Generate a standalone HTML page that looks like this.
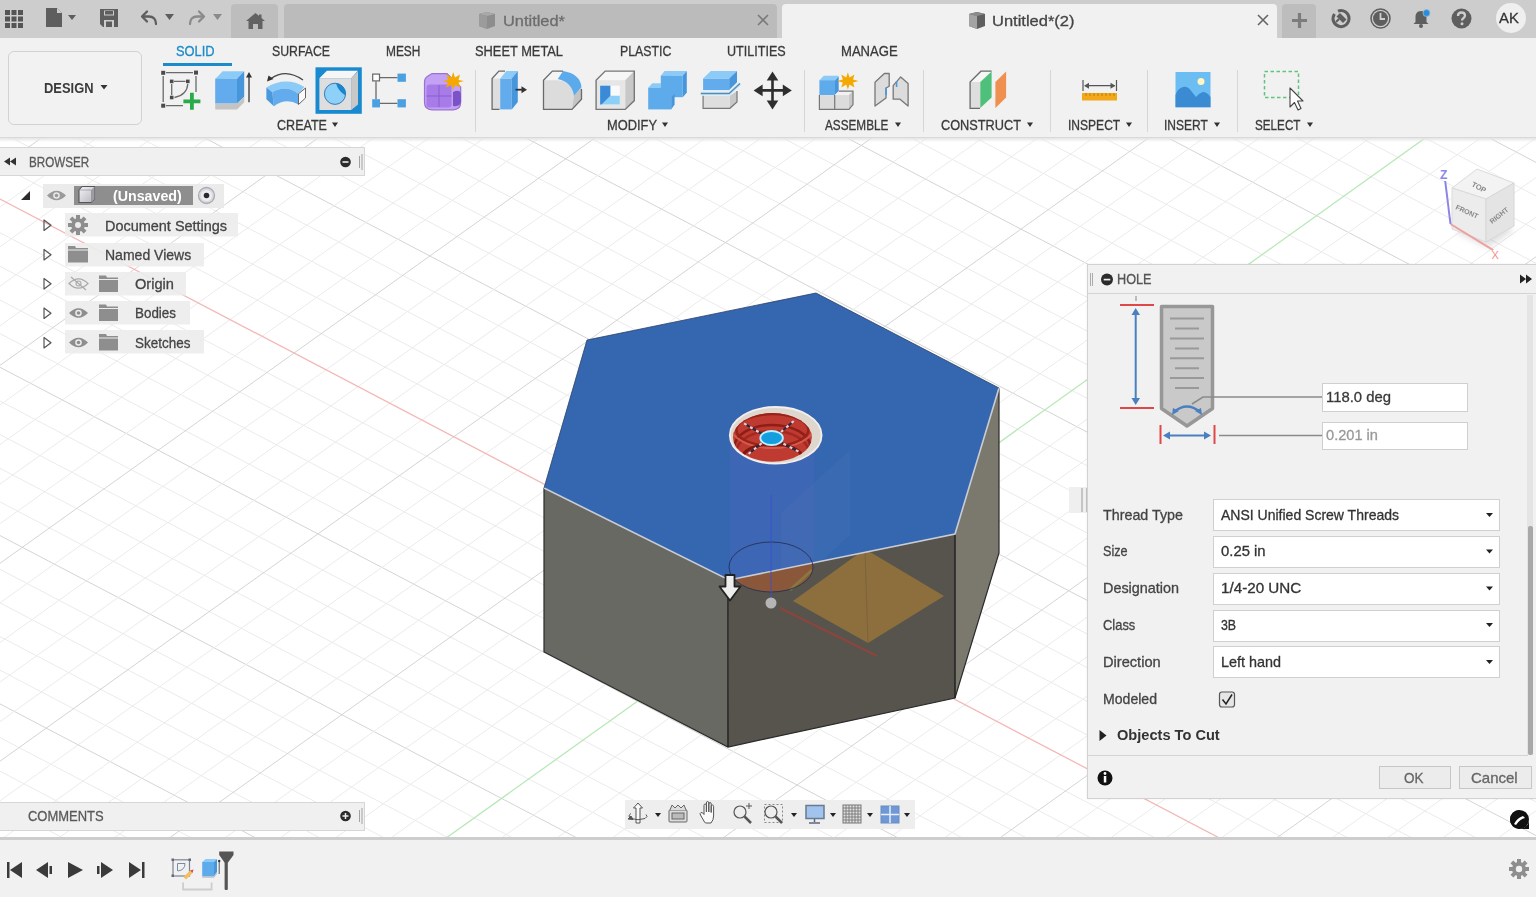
<!DOCTYPE html>
<html><head><meta charset="utf-8">
<style>
*{box-sizing:border-box;margin:0;padding:0}
html,body{width:1536px;height:897px;overflow:hidden;background:#fff;font-family:"Liberation Sans",sans-serif;color:#3c3c3c}
.a{position:absolute}
#topbar{left:0;top:0;width:1536px;height:38px;background:#cdcdcd}
#toolbar{left:0;top:38px;width:1536px;height:100px;background:#f1f1f1;border-bottom:1px solid #d9d9d9}
#viewport{left:0;top:138px;width:1536px;height:700px;background:#fff;overflow:hidden}
#timeline{left:0;top:837px;width:1536px;height:60px;background:#f1f1f1;border-top:3px solid #cdcdcd}
.tab{top:4px;height:34px;border-radius:4px 4px 0 0}
.tl{font-size:13.5px;color:#444;top:44px;white-space:nowrap;line-height:16px}
.gl{font-size:13.5px;color:#444;top:117px;white-space:nowrap;line-height:16px}
.sep{top:70px;width:1px;height:62px;background:#d6d6d6}
.tri{display:inline-block;width:0;height:0;border-left:3.5px solid transparent;border-right:3.5px solid transparent;border-top:5px solid #333;vertical-align:middle;margin-left:4px;position:relative;top:-2px}
svg{overflow:visible}
.tx{white-space:nowrap;line-height:1;}
</style></head><body>
<div id="topbar" class="a">
<!-- apps grid -->
<svg class="a" style="left:5px;top:10px" width="18" height="18"><g fill="#555">
<rect x="0" y="0" width="5" height="5"/><rect x="6.5" y="0" width="5" height="5"/><rect x="13" y="0" width="5" height="5"/>
<rect x="0" y="6.5" width="5" height="5"/><rect x="6.5" y="6.5" width="5" height="5"/><rect x="13" y="6.5" width="5" height="5"/>
<rect x="0" y="13" width="5" height="5"/><rect x="6.5" y="13" width="5" height="5"/><rect x="13" y="13" width="5" height="5"/></g></svg>
<!-- doc -->
<svg class="a" style="left:46px;top:8px" width="34" height="22"><path d="M0 0H11L16 5V19H0Z" fill="#5e5e5e"/><path d="M11 0V5H16" fill="#cdcdcd"/><path d="M22 7H30L26 12Z" fill="#5e5e5e"/></svg>
<!-- save -->
<svg class="a" style="left:100px;top:9px" width="18" height="18"><path d="M0 0H18V18H3L0 15Z" fill="#5e5e5e"/><rect x="4" y="1.5" width="10" height="5" fill="#cdcdcd"/><rect x="5" y="2" width="8" height="3.5" fill="#5e5e5e"/><rect x="4" y="11" width="10" height="7" fill="#cdcdcd"/><rect x="6" y="12.5" width="6" height="5.5" fill="#5e5e5e"/></svg>
<!-- undo -->
<svg class="a" style="left:140px;top:10px" width="40" height="18"><path d="M3 6.5H9C13 6.5 16 9 16 14" stroke="#5e5e5e" stroke-width="2.3" fill="none" stroke-linecap="round"/><path d="M7 1.5L2 6.5L7 11.5" stroke="#5e5e5e" stroke-width="2.3" fill="none" stroke-linecap="round" stroke-linejoin="round"/><path d="M25 4H34L29.5 10Z" fill="#5e5e5e"/></svg>
<!-- redo -->
<svg class="a" style="left:187px;top:10px" width="40" height="18"><path d="M16 6.5H10C6 6.5 3 9 3 14" stroke="#8a8a8a" stroke-width="2.3" fill="none" stroke-linecap="round"/><path d="M12 1.5L17 6.5L12 11.5" stroke="#8a8a8a" stroke-width="2.3" fill="none" stroke-linecap="round" stroke-linejoin="round"/><path d="M26 4H35L30.5 10Z" fill="#8a8a8a"/></svg>
<!-- home tab -->
<div class="a tab" style="left:231px;width:47px;background:#bdbdbd"></div>
<svg class="a" style="left:246px;top:13px" width="19" height="17"><path d="M9.5 0L19 8H16.5V16H12V11H7V16H2.5V8H0Z" fill="#626262"/><rect x="13" y="1.5" width="2.5" height="4" fill="#626262"/></svg>
<!-- tab 1 -->
<div class="a tab" style="left:284px;width:493px;background:#bbbbbb"></div>
<svg class="a" style="left:477px;top:11px" width="20" height="19"><path d="M2 3L10 1L18 3V15L10 18L2 15Z" fill="#8d8d8d"/><path d="M2 3L10 5L18 3L10 1Z" fill="#a9a9a9"/><path d="M10 5V18L2 15V3Z" fill="#9b9b9b"/></svg>
<svg class="a" style="left:757px;top:14px" width="12" height="12"><path d="M1 1L11 11M11 1L1 11" stroke="#7a7a7a" stroke-width="1.6"/></svg>
<!-- tab 2 active -->
<div class="a tab" style="left:782px;width:495px;height:35px;background:#f1f1f1"></div>
<svg class="a" style="left:967px;top:11px" width="20" height="19"><path d="M2 3L10 1L18 3V15L10 18L2 15Z" fill="#5f5f5f"/><path d="M2 3L10 5L18 3L10 1Z" fill="#8a8a8a"/><path d="M10 5V18L2 15V3Z" fill="#a3a3a3"/></svg>
<svg class="a" style="left:1257px;top:14px" width="12" height="12"><path d="M1 1L11 11M11 1L1 11" stroke="#666" stroke-width="1.6"/></svg>
<!-- plus tab -->
<div class="a tab" style="left:1282px;width:34px;background:#bdbdbd"></div>
<svg class="a" style="left:1291px;top:12px" width="17" height="17"><path d="M8.5 1V16M1 8.5H16" stroke="#7c7c7c" stroke-width="3.2"/></svg>
<!-- right icons -->
<svg class="a" style="left:1330px;top:8px" width="21" height="21"><path d="M4.5 6A8 8 0 1 0 8 3.2" fill="none" stroke="#5e5e5e" stroke-width="3"/><path d="M6.5 8.5L10 5L16.5 11.5L13 15Z" fill="#5e5e5e"/><path d="M6 14L9 11" stroke="#5e5e5e" stroke-width="2"/></svg>
<svg class="a" style="left:1370px;top:8px" width="21" height="21"><circle cx="10.5" cy="10.5" r="9.5" stroke="#5e5e5e" stroke-width="1.5" fill="none"/><circle cx="10.5" cy="10.5" r="7.5" fill="#5e5e5e"/><path d="M10.5 5V11H15" stroke="#cdcdcd" stroke-width="1.8" fill="none"/></svg>
<svg class="a" style="left:1411px;top:7px" width="22" height="22"><path d="M10 4C6 4 4.5 7 4.5 10V15L2.5 17H17.5L15.5 15V10C15.5 7 14 4 10 4Z" fill="#5e5e5e"/><circle cx="10" cy="19" r="2" fill="#5e5e5e"/><circle cx="15.5" cy="6" r="3.5" fill="#2a8ede" stroke="#9bc" stroke-width="0.8"/></svg>
<svg class="a" style="left:1451px;top:8px" width="21" height="21"><circle cx="10.5" cy="10.5" r="10" fill="#5e5e5e"/><path d="M7 8C7 5.5 8.8 4.5 10.5 4.5C12.5 4.5 14 5.8 14 7.6C14 10 11 10.2 11 12.5" stroke="#cdcdcd" stroke-width="2.3" fill="none"/><circle cx="11" cy="15.8" r="1.5" fill="#cdcdcd"/></svg>
<div class="a" style="left:1496px;top:3px;width:30px;height:30px;border-radius:50%;background:#efefef;"></div>
</div>
<div id="toolbar" class="a"></div>
<div class="a" style="left:8px;top:51px;width:134px;height:74px;border:1.5px solid #d2d2d2;border-radius:6px;background:#f2f2f2"></div>
<div class="a" style="left:163px;top:63px;width:69px;height:3px;background:#1b8bc9"></div>
<div class="a sep" style="left:475px"></div>
<div class="a sep" style="left:804px"></div>
<div class="a sep" style="left:923px"></div>
<div class="a sep" style="left:1050px"></div>
<div class="a sep" style="left:1147px"></div>
<div class="a sep" style="left:1237px"></div>
<svg class="a" style="left:0;top:0" width="1536" height="138">
<g fill="#333">
<path d="M100.5 85H107.5L104 89.5Z"/>
<path d="M332 122.5H338L335 127Z"/><path d="M662 122.5H668L665 127Z"/><path d="M895 122.5H901L898 127Z"/>
<path d="M1027 122.5H1033L1030 127Z"/><path d="M1126 122.5H1132L1129 127Z"/><path d="M1214 122.5H1220L1217 127Z"/><path d="M1307 122.5H1313L1310 127Z"/>
</g>
<!-- sketch icon -->
<g stroke="#6a6a6a" stroke-width="1.3" fill="none">
<path d="M166 72.7H193M163.2 76V102M196 76V92M166 105.7H183"/>
<path d="M174 81.4H185.5M171.7 84V95M187.8 84Q187 95 174.5 97.5"/>
</g>
<g fill="#4a4a4a"><rect x="161.2" y="70.8" width="4" height="4"/><rect x="194" y="70.6" width="4" height="4"/><rect x="161.2" y="103.7" width="4" height="4"/>
<rect x="169.9" y="79.6" width="3.6" height="3.6"/><rect x="186" y="79.6" width="3.6" height="3.6"/><rect x="169.9" y="95.7" width="3.6" height="3.6"/></g>
<path d="M191.9 92.8V109.8M183.4 101.3H200.4" stroke="#2aaa4a" stroke-width="3.8"/>
<!-- extrude -->
<g>
<path d="M215.2 79L222.7 71.2H244.2L237 78.7Z" fill="#8ccbf7"/>
<path d="M237 78.7L244.2 71.2V96.8L237 103.6Z" fill="#4796dc"/>
<path d="M215.2 78.8H237V103.6H215.2Z" fill="#62aced"/>
<path d="M215.2 103.6H237L244.2 96.8V102.3L237 109.5H215.2Z" fill="#c4c4c4"/>
<path d="M249 102.3V76" stroke="#333" stroke-width="1.3"/><path d="M246 77.5L249 72L252 77.5Z" fill="#333"/>
</g>
<!-- revolve -->
<g>
<path d="M303 80Q286 68 271 78.5" fill="none" stroke="#444" stroke-width="1.3"/><path d="M267 81.5L268.5 75.5L273.5 79Z" fill="#333"/>
<path d="M266.4 87.4Q286 76 304.4 86.9L298.5 93.8Q286 84 272.3 92.2Z" fill="#8ccbf7"/>
<path d="M272.3 92.2Q286 84 298.5 93.8V104.5Q286 97 273.9 106.2Z" fill="#62aced"/>
<path d="M266.4 87.4L272.3 92.2L273.9 106.2L266.4 99.2Z" fill="#4a98de"/>
<path d="M298.5 93.8L305.5 88V98L298.5 104.5Z" fill="#fafafa" stroke="#666" stroke-width="1"/>
</g>
<!-- hole (active) -->
<g>
<rect x="315.5" y="67.3" width="46.3" height="46.5" fill="#1a8ad0"/>
<path d="M319.4 78.2L326.9 70.7H358L351.2 78.2Z" fill="#f6f6f6"/>
<path d="M351.2 78.2L358 71.4V104.4L351.2 110Z" fill="#c8c8c8"/>
<rect x="319.4" y="78.2" width="31.8" height="31.8" fill="#dedede"/>
<circle cx="335" cy="93.8" r="10.6" fill="#8dd0f8" stroke="#3a7ab8" stroke-width="1"/>
<path d="M336 83.3A10.6 10.6 0 0 1 345.5 95.5Q338 91 336 83.3Z" fill="#1a85cc"/>
</g>
<!-- pattern -->
<g>
<path d="M379.7 77.7H397.5M376 81.4V99.2M380 103.3H397.5" stroke="#6a6a6a" stroke-width="1.3"/>
<rect x="372.7" y="74.1" width="6.8" height="6.8" fill="#fff" stroke="#666" stroke-width="1.2"/>
<rect x="397.5" y="73.6" width="8.4" height="8.2" fill="#4aa0e0"/><rect x="372.2" y="99.2" width="7.8" height="8.2" fill="#4aa0e0"/><rect x="397.5" y="99.2" width="8.4" height="8.2" fill="#4aa0e0"/>
</g>
<!-- purple form -->
<g>
<path d="M432 73.6H447L460.7 87V102Q460.7 109.8 453 109.8H432Q424.5 109.8 424.5 102V82Q424.5 78 428 76Z" fill="#c3a2f5" stroke="#9a70d0" stroke-width="1.2"/>
<rect x="426.5" y="84.5" width="25" height="23" rx="3" fill="#a87ce8"/>
<path d="M439 85V107M426.5 96H451.5" stroke="#8a5cd0" stroke-width="1"/>
<path d="M453 92Q461 88 461 96V101Q461 107 453 106Z" fill="#7c52c8"/>
<path d="M453.2 72L455 77.5L460 74.5L458.5 80L464 81L458.5 82.5L460.5 87.5L455 85L453.2 90L451.5 85L446 87.5L448 82.5L442.5 81L448 80L446.5 74.5L451.5 77.5Z" fill="#f5a800"/>
</g>
<!-- press pull -->
<g>
<path d="M492.1 78.6L498.9 71.1H506.3L500.2 78.6Z" fill="#f4f4f4"/>
<path d="M492.1 78.6H500.2V109.4H492.1Z" fill="#dedede"/>
<path d="M505 71.1H498.9L492.1 78.6V109.4H499.5" fill="none" stroke="#6a6a6a" stroke-width="1.3"/>
<path d="M500.2 78.6L506.3 71.1H517.8L511.7 78.6Z" fill="#8ccbf7"/>
<rect x="500.2" y="78.6" width="11.5" height="30.8" fill="#62aced"/>
<path d="M511.7 78.6L517.8 71.1V101.9L511.7 109.4Z" fill="#4796dc"/>
<path d="M515.5 89.7H523" stroke="#333" stroke-width="1.8"/><path d="M521.5 86.2L527 89.7L521.5 93.2Z" fill="#333"/>
</g>
<!-- fillet -->
<g>
<path d="M543.5 80.2L552.4 71.1H563.2L557.8 78.9Z" fill="#f4f4f4"/>
<path d="M543.5 80.2H557.8Q574 82 574 95.8L572 109.4H543.5Z" fill="#dcdcdc"/>
<path d="M574 95.8L581.5 87V99.2L572 109.4Z" fill="#c4c4c4"/>
<path d="M557.8 78.9L563.2 71.1Q580 74 581.5 87L574 95.8Q572 82 557.8 78.9Z" fill="#5aaaec"/>
<path d="M563 71.1H552.4L543.5 80.2V109.4H572L581.5 99.2V89" fill="none" stroke="#6a6a6a" stroke-width="1.3"/>
</g>
<!-- shell -->
<g>
<path d="M596.1 80.2L605.2 71.1H634.3L625.2 80.2Z" fill="#f6f6f6"/>
<path d="M625.2 80.2L634.3 71.1V100.6L625.2 109.4Z" fill="#c8c8c8"/>
<rect x="596.1" y="80.2" width="29.1" height="29.2" fill="#e6e6e6"/>
<path d="M596.1 80.2L605.2 71.1H634.3V100.6L625.2 109.4H596.1Z" fill="none" stroke="#777" stroke-width="1.4"/>
<rect x="600.2" y="85.7" width="19.6" height="18.9" fill="#fafafa"/>
<path d="M600.2 85.7H610.3V95.8H619.8V104.6H600.2Z" fill="#8ccff8"/>
<path d="M600.2 85.7H610.3V95.8L601.5 104.6H600.2Z" fill="#3a8ad8"/>
</g>
<!-- combine -->
<g fill="#5eabec">
<path d="M660.8 75.8L664.5 71.1H686.8L682.8 75.5Z" fill="#8ccbf7"/>
<path d="M682.8 75.5L686.8 71.1V92.4L682.8 97.2Z" fill="#4796dc"/>
<rect x="660.8" y="75.6" width="22" height="21.6"/>
<path d="M648.2 87.7L652.3 83.3H661V87.7Z" fill="#8ccbf7"/>
<rect x="648.2" y="87.7" width="23" height="21.7"/>
<path d="M671.2 97.2L674.6 93.8V104.6L671.2 109.4Z" fill="#4796dc"/>
</g>
<!-- split -->
<g>
<path d="M703.1 78.6L710.9 71.1H737L729.2 78.6Z" fill="#8ccbf7"/>
<rect x="703.1" y="78.6" width="26.1" height="11.5" fill="#62aced"/>
<path d="M729.2 78.6L737 71.1V82.3L729.2 90.1Z" fill="#4796dc"/>
<path d="M729.9 95.8L737 91.1V101.9L729.9 108.3Z" fill="#c8c8c8"/>
<rect x="703.1" y="95.8" width="26.8" height="12.5" fill="#dedede"/>
<path d="M703.1 95.8V108.3H729.9L737 101.9V91.1" fill="none" stroke="#777" stroke-width="1.2"/>
<path d="M700.8 93.5H729.2L740 83.6" fill="none" stroke="#c8ecff" stroke-width="3.5"/>
<path d="M700.8 93.5H729.2L740 83.6" fill="none" stroke="#5a8ab0" stroke-width="1.3"/>
</g>
<!-- move -->
<g fill="#2e2e2e">
<path d="M772.5 76V105M758 90.4H787" stroke="#2e2e2e" stroke-width="2.6"/>
<path d="M772.5 71.4L766.7 80.4H778.3Z"/><path d="M772.5 109.4L766.7 100.4H778.3Z"/><path d="M753.6 90.4L762.6 84.6V96.2Z"/><path d="M791.8 90.4L782.8 84.6V96.2Z"/>
</g>
<!-- new component -->
<g>
<path d="M819.4 80.2L823.8 75.8H838.7L835 80.2Z" fill="#8ccbf7"/>
<rect x="819.4" y="80.2" width="15.6" height="14.9" fill="#5eabec"/>
<path d="M835 80.2L838.7 76.2V91.8L835 95.1Z" fill="#4796dc"/>
<path d="M834.7 95.1L838.7 91.1H853L848.9 95.1Z" fill="#f2f2f2"/>
<path d="M848.9 95.1L853 91.1V104.6L848.9 109.4Z" fill="#c8c8c8"/>
<rect x="819.4" y="95.1" width="29.5" height="14.3" fill="#dcdcdc"/>
<path d="M819.4 95.1V109.4H848.9L853 104.6V91.1H838.7M834.7 95.1V109.4" fill="none" stroke="#777" stroke-width="1.2"/>
<path d="M847.9 72.3L849.5 77.5L854.5 74.5L853 79.5L858.5 80.9L853 82.4L854.5 87.5L849.5 84.5L847.9 89.5L846.2 84.5L841.3 87.5L842.8 82.4L837.3 80.9L842.8 79.5L841.3 74.5L846.2 77.5Z" fill="#f5a800"/>
</g>
<!-- joint -->
<g fill="#dcdcdc" stroke="#777" stroke-width="1.3" stroke-linejoin="round">
<path d="M875 82.3L884.4 73.5H889.2V86.3L886 88V98L875 106Z"/>
<path d="M893.2 85.7L900.7 76.9L908.1 83.6V106L900 99.2H893.2Z"/>
</g>
<path d="M886.1 87.7V95.1M896.6 81V87" stroke="#4a98de" stroke-width="1.6"/>
<!-- construct -->
<g>
<path d="M970.1 82L980.9 71.2H991.6L980.3 82Z" fill="#f6f6f6"/>
<rect x="970.1" y="82" width="10.2" height="26.3" fill="#dedede"/>
<path d="M991.6 71.2H980.9L970.1 82V108.3H980" fill="none" stroke="#6a6a6a" stroke-width="1.3"/>
<path d="M980.3 82L991.6 71.5V97.6L980.3 108Z" fill="#4fc07a"/>
<path d="M995.4 82L1006.1 71.5V97.6L995.4 108Z" fill="#ef9050"/>
</g>
<!-- inspect -->
<g>
<path d="M1083 80V91M1116.5 80V91M1085 85.7H1114.5" stroke="#555" stroke-width="1.2"/>
<path d="M1084 85.7L1089 82.7V88.7Z M1115.5 85.7L1110.5 82.7V88.7Z" fill="#555"/>
<rect x="1082" y="93" width="35" height="7.5" fill="#f2a81a"/>
<path d="M1086 93V96M1090 93V96M1094 93V96M1098 93V96M1102 93V96M1106 93V96M1110 93V96M1114 93V96" stroke="#b37400" stroke-width="0.8"/>
</g>
<!-- insert -->
<g>
<rect x="1175.5" y="72" width="35" height="35.2" fill="#6cbdf2"/>
<path d="M1175.5 107.2V95Q1178 88 1183 87Q1188 86 1192 92L1196 97Q1199 93 1203 92Q1207 92 1210.5 97V107.2Z" fill="#3a8bd2"/>
<circle cx="1201" cy="81.5" r="3.5" fill="#fff6c0"/>
</g>
<!-- select -->
<g>
<rect x="1264.5" y="71.5" width="34" height="26" fill="none" stroke="#5fc47f" stroke-width="1.5" stroke-dasharray="3.5 2.5"/>
<path d="M1290 88V107L1294.5 102.5L1298 110L1301 108.5L1297.5 101H1303Z" fill="#fff" stroke="#444" stroke-width="1.1" stroke-linejoin="round"/>
</g>
</svg>
<div id="viewport" class="a"><svg width="1536" height="700" style="position:absolute;left:0;top:0"><line x1="0" y1="-948.8" x2="1536" y2="-143.9" stroke="#d4d4d4"/>
<line x1="0" y1="-915.1" x2="1536" y2="-110.3" stroke="#ebebeb"/>
<line x1="0" y1="-881.5" x2="1536" y2="-76.6" stroke="#ebebeb"/>
<line x1="0" y1="-847.8" x2="1536" y2="-43.0" stroke="#ebebeb"/>
<line x1="0" y1="-814.2" x2="1536" y2="-9.3" stroke="#ebebeb"/>
<line x1="0" y1="-780.5" x2="1536" y2="24.4" stroke="#d4d4d4"/>
<line x1="0" y1="-746.8" x2="1536" y2="58.0" stroke="#ebebeb"/>
<line x1="0" y1="-713.2" x2="1536" y2="91.7" stroke="#ebebeb"/>
<line x1="0" y1="-679.5" x2="1536" y2="125.3" stroke="#ebebeb"/>
<line x1="0" y1="-645.9" x2="1536" y2="159.0" stroke="#ebebeb"/>
<line x1="0" y1="-612.2" x2="1536" y2="192.7" stroke="#d4d4d4"/>
<line x1="0" y1="-578.5" x2="1536" y2="226.3" stroke="#ebebeb"/>
<line x1="0" y1="-544.9" x2="1536" y2="260.0" stroke="#ebebeb"/>
<line x1="0" y1="-511.2" x2="1536" y2="293.6" stroke="#ebebeb"/>
<line x1="0" y1="-477.6" x2="1536" y2="327.3" stroke="#ebebeb"/>
<line x1="0" y1="-443.9" x2="1536" y2="361.0" stroke="#d4d4d4"/>
<line x1="0" y1="-410.2" x2="1536" y2="394.6" stroke="#ebebeb"/>
<line x1="0" y1="-376.6" x2="1536" y2="428.3" stroke="#ebebeb"/>
<line x1="0" y1="-342.9" x2="1536" y2="461.9" stroke="#ebebeb"/>
<line x1="0" y1="-309.3" x2="1536" y2="495.6" stroke="#ebebeb"/>
<line x1="0" y1="-275.6" x2="1536" y2="529.3" stroke="#d4d4d4"/>
<line x1="0" y1="-241.9" x2="1536" y2="562.9" stroke="#ebebeb"/>
<line x1="0" y1="-208.3" x2="1536" y2="596.6" stroke="#ebebeb"/>
<line x1="0" y1="-174.6" x2="1536" y2="630.2" stroke="#ebebeb"/>
<line x1="0" y1="-141.0" x2="1536" y2="663.9" stroke="#ebebeb"/>
<line x1="0" y1="-107.3" x2="1536" y2="697.6" stroke="#d4d4d4"/>
<line x1="0" y1="-73.6" x2="1536" y2="731.2" stroke="#ebebeb"/>
<line x1="0" y1="-40.0" x2="1536" y2="764.9" stroke="#ebebeb"/>
<line x1="0" y1="-6.3" x2="1536" y2="798.5" stroke="#ebebeb"/>
<line x1="0" y1="27.3" x2="1536" y2="832.2" stroke="#ebebeb"/>
<line x1="0" y1="94.7" x2="1536" y2="899.5" stroke="#ebebeb"/>
<line x1="0" y1="128.3" x2="1536" y2="933.2" stroke="#ebebeb"/>
<line x1="0" y1="162.0" x2="1536" y2="966.8" stroke="#ebebeb"/>
<line x1="0" y1="195.6" x2="1536" y2="1000.5" stroke="#ebebeb"/>
<line x1="0" y1="229.3" x2="1536" y2="1034.2" stroke="#d4d4d4"/>
<line x1="0" y1="263.0" x2="1536" y2="1067.8" stroke="#ebebeb"/>
<line x1="0" y1="296.6" x2="1536" y2="1101.5" stroke="#ebebeb"/>
<line x1="0" y1="330.3" x2="1536" y2="1135.1" stroke="#ebebeb"/>
<line x1="0" y1="363.9" x2="1536" y2="1168.8" stroke="#ebebeb"/>
<line x1="0" y1="397.6" x2="1536" y2="1202.5" stroke="#d4d4d4"/>
<line x1="0" y1="431.3" x2="1536" y2="1236.1" stroke="#ebebeb"/>
<line x1="0" y1="464.9" x2="1536" y2="1269.8" stroke="#ebebeb"/>
<line x1="0" y1="498.6" x2="1536" y2="1303.4" stroke="#ebebeb"/>
<line x1="0" y1="532.2" x2="1536" y2="1337.1" stroke="#ebebeb"/>
<line x1="0" y1="565.9" x2="1536" y2="1370.8" stroke="#d4d4d4"/>
<line x1="0" y1="599.6" x2="1536" y2="1404.4" stroke="#ebebeb"/>
<line x1="0" y1="633.2" x2="1536" y2="1438.1" stroke="#ebebeb"/>
<line x1="0" y1="666.9" x2="1536" y2="1471.7" stroke="#ebebeb"/>
<line x1="0" y1="700.5" x2="1536" y2="1505.4" stroke="#ebebeb"/>
<line x1="0" y1="-10.1" x2="1536" y2="-1108.3" stroke="#ebebeb"/>
<line x1="0" y1="29.5" x2="1536" y2="-1068.7" stroke="#d4d4d4"/>
<line x1="0" y1="69.1" x2="1536" y2="-1029.2" stroke="#ebebeb"/>
<line x1="0" y1="108.7" x2="1536" y2="-989.6" stroke="#ebebeb"/>
<line x1="0" y1="148.2" x2="1536" y2="-950.0" stroke="#ebebeb"/>
<line x1="0" y1="187.8" x2="1536" y2="-910.4" stroke="#ebebeb"/>
<line x1="0" y1="227.4" x2="1536" y2="-870.8" stroke="#d4d4d4"/>
<line x1="0" y1="267.0" x2="1536" y2="-831.3" stroke="#ebebeb"/>
<line x1="0" y1="306.6" x2="1536" y2="-791.7" stroke="#ebebeb"/>
<line x1="0" y1="346.1" x2="1536" y2="-752.1" stroke="#ebebeb"/>
<line x1="0" y1="385.7" x2="1536" y2="-712.5" stroke="#ebebeb"/>
<line x1="0" y1="425.3" x2="1536" y2="-672.9" stroke="#d4d4d4"/>
<line x1="0" y1="464.9" x2="1536" y2="-633.4" stroke="#ebebeb"/>
<line x1="0" y1="504.5" x2="1536" y2="-593.8" stroke="#ebebeb"/>
<line x1="0" y1="544.0" x2="1536" y2="-554.2" stroke="#ebebeb"/>
<line x1="0" y1="583.6" x2="1536" y2="-514.6" stroke="#ebebeb"/>
<line x1="0" y1="623.2" x2="1536" y2="-475.0" stroke="#d4d4d4"/>
<line x1="0" y1="662.8" x2="1536" y2="-435.5" stroke="#ebebeb"/>
<line x1="0" y1="702.4" x2="1536" y2="-395.9" stroke="#ebebeb"/>
<line x1="0" y1="741.9" x2="1536" y2="-356.3" stroke="#ebebeb"/>
<line x1="0" y1="781.5" x2="1536" y2="-316.7" stroke="#ebebeb"/>
<line x1="0" y1="821.1" x2="1536" y2="-277.1" stroke="#d4d4d4"/>
<line x1="0" y1="860.7" x2="1536" y2="-237.6" stroke="#ebebeb"/>
<line x1="0" y1="900.3" x2="1536" y2="-198.0" stroke="#ebebeb"/>
<line x1="0" y1="939.8" x2="1536" y2="-158.4" stroke="#ebebeb"/>
<line x1="0" y1="979.4" x2="1536" y2="-118.8" stroke="#ebebeb"/>
<line x1="0" y1="1058.6" x2="1536" y2="-39.7" stroke="#ebebeb"/>
<line x1="0" y1="1098.2" x2="1536" y2="-0.1" stroke="#ebebeb"/>
<line x1="0" y1="1137.7" x2="1536" y2="39.5" stroke="#ebebeb"/>
<line x1="0" y1="1177.3" x2="1536" y2="79.1" stroke="#ebebeb"/>
<line x1="0" y1="1216.9" x2="1536" y2="118.7" stroke="#d4d4d4"/>
<line x1="0" y1="1256.5" x2="1536" y2="158.2" stroke="#ebebeb"/>
<line x1="0" y1="1296.1" x2="1536" y2="197.8" stroke="#ebebeb"/>
<line x1="0" y1="1335.6" x2="1536" y2="237.4" stroke="#ebebeb"/>
<line x1="0" y1="1375.2" x2="1536" y2="277.0" stroke="#ebebeb"/>
<line x1="0" y1="1414.8" x2="1536" y2="316.6" stroke="#d4d4d4"/>
<line x1="0" y1="1454.4" x2="1536" y2="356.1" stroke="#ebebeb"/>
<line x1="0" y1="1494.0" x2="1536" y2="395.7" stroke="#ebebeb"/>
<line x1="0" y1="1533.5" x2="1536" y2="435.3" stroke="#ebebeb"/>
<line x1="0" y1="1573.1" x2="1536" y2="474.9" stroke="#ebebeb"/>
<line x1="0" y1="1612.7" x2="1536" y2="514.5" stroke="#d4d4d4"/>
<line x1="0" y1="1652.3" x2="1536" y2="554.0" stroke="#ebebeb"/>
<line x1="0" y1="1691.9" x2="1536" y2="593.6" stroke="#ebebeb"/>
<line x1="0" y1="1731.4" x2="1536" y2="633.2" stroke="#ebebeb"/>
<line x1="0" y1="1771.0" x2="1536" y2="672.8" stroke="#ebebeb"/>
<line x1="0" y1="1810.6" x2="1536" y2="712.4" stroke="#d4d4d4"/><g transform="translate(0,-138)">
<defs><clipPath id="topc"><path d="M816 293L999 388L955 534L729 580L544 488L587 340Z"/></clipPath></defs>
<line x1="0" y1="199" x2="1536" y2="1003.9" stroke="#f4b8b8" stroke-width="1.3"/>
<line x1="0" y1="1157" x2="1618.2" y2="0" stroke="#b8e8b8" stroke-width="1.3"/>
<!-- view cube -->
<defs><filter id="blr" x="-50%" y="-50%" width="200%" height="200%"><feGaussianBlur stdDeviation="3"/></filter><filter id="blr1"><feGaussianBlur stdDeviation="0.6"/></filter></defs>
<path d="M1456 232L1488 248L1514 230L1482 214Z" fill="#000" fill-opacity="0.12" filter="url(#blr)"/>
<g filter="url(#blr1)">
<path d="M1452 188L1477 169L1514 183L1486 199Z" fill="#f3f3f3" stroke="#dadada" stroke-width="1"/>
<path d="M1452 188L1486 199V242L1452 229Z" fill="#ececec" stroke="#dadada" stroke-width="1"/>
<path d="M1486 199L1514 183V226L1486 242Z" fill="#e4e4e4" stroke="#d6d6d6" stroke-width="1"/>
<text x="1471" y="186" font-size="7.5" fill="#888" font-family="Liberation Sans" font-weight="700" transform="rotate(28 1471 186)">TOP</text>
<text x="1455" y="209" font-size="7" fill="#888" font-family="Liberation Sans" font-weight="700" transform="rotate(24 1455 209)">FRONT</text>
<text x="1492" y="224" font-size="7" fill="#888" font-family="Liberation Sans" font-weight="700" transform="rotate(-38 1492 224)">RIGHT</text>
</g>
<path d="M1445.2 181L1450.5 224" stroke="#8a85e8" stroke-width="2"/>
<path d="M1450.5 224L1493.2 250.2" stroke="#eda0a0" stroke-width="2"/>
<text x="1440" y="178.5" font-size="12" fill="#8a85e8" font-family="Liberation Sans" font-weight="700">Z</text>
<text x="1491.5" y="258.5" font-size="11" fill="#f09090" font-family="Liberation Sans">X</text>
<!-- model faces -->
<path d="M544 488L729 580L728 747L544 652Z" fill="#696964"/>
<path d="M729 580L955 534L955 698L728 747Z" fill="#57544d"/>
<path d="M955 534L999 388L999 553L955 698Z" fill="#7b786d"/>
<!-- orange diamond -->
<path d="M793 601L865 549L944 596L868 643Z" fill="#d0902a" fill-opacity="0.45"/>
<path d="M865 552L868 643" stroke="#5a4a30" stroke-opacity="0.35" stroke-width="1"/>
<path d="M780 608L877 656" stroke="#b03a30" stroke-width="2" stroke-opacity="0.6"/>
<!-- lower ellipse fill -->
<ellipse cx="771" cy="567" rx="42" ry="25" fill="#c05a2a" fill-opacity="0.5"/>
<path d="M790 590L812 570" stroke="#88aa40" stroke-opacity="0.4" stroke-width="3"/>
<!-- top face -->
<path d="M816 293L999 388L955 534L729 580L544 488L587 340Z" fill="#3567b1"/>
<!-- cylinder overlay -->
<g clip-path="url(#topc)">
<path d="M730 436V567A42 25 0 0 0 814 567V436Z" fill="#7060c8" fill-opacity="0.14"/>
<path d="M781 513L850 450V535L781 598Z" fill="#a0b0c8" fill-opacity="0.05"/>
</g>
<!-- edges -->
<path d="M544 488L544 652L728 747L955 698L999 553L999 388" fill="none" stroke="#2a2a2a" stroke-width="1.2"/>
<path d="M728 582V747M955 534V698" stroke="#222" stroke-width="1.5"/>
<path d="M544 488L729 580L955 534L999 388" fill="none" stroke="#c9ccd4" stroke-width="1.6"/>
<path d="M544 488L587 340L816 293L999 388" fill="none" stroke="#2a3f66" stroke-width="0.8"/>
<!-- lower ellipse -->
<ellipse cx="771" cy="567" rx="42" ry="25" fill="none" stroke="#222a50" stroke-width="1" stroke-opacity="0.8"/>
<path d="M771 495V600" stroke="#3a4fd0" stroke-width="1.5" stroke-opacity="0.55"/>
<circle cx="771" cy="603" r="5.5" fill="#b5b5b5"/>
<!-- arrow -->
<path d="M725.5 575H734.5V586.5H740.5L730 600.5L719.5 586.5H725.5Z" fill="#eee" stroke="#222" stroke-width="1.8" stroke-linejoin="round"/>
<!-- hole -->
<defs><clipPath id="redc"><ellipse cx="772.4" cy="437.4" rx="39.4" ry="24.3"/></clipPath></defs>
<ellipse cx="775.7" cy="435.3" rx="45.9" ry="28.3" fill="#ddd7ce" stroke="#f4eeee" stroke-width="1.8"/>
<ellipse cx="772.4" cy="437.4" rx="39.4" ry="24.3" fill="#bf3a30"/>
<g clip-path="url(#redc)" fill="none" stroke-width="2.6">
<ellipse cx="772.4" cy="447" rx="38" ry="22" stroke="#8e1e18"/>
<ellipse cx="772.4" cy="452" rx="36" ry="21" stroke="#a42820"/>
<ellipse cx="772.4" cy="430" rx="36" ry="16" stroke="#9a2219"/>
<ellipse cx="772.4" cy="426" rx="42" ry="22" stroke="#d05a4e" stroke-width="2"/>
<ellipse cx="772.4" cy="458" rx="30" ry="14" stroke="#801812" stroke-width="3"/>
</g>
<path d="M744 423.4L762 434M793.8 421L781 432M748.5 453.9L762 443M798.5 451.5L782 443" stroke="#2a2a3a" stroke-width="2.2"/>
<path d="M744 423.4L762 434M793.8 421L781 432M748.5 453.9L762 443M798.5 451.5L782 443" stroke="#f4c8c8" stroke-width="2.2" stroke-dasharray="3 4"/>
<ellipse cx="771.6" cy="438" rx="11.3" ry="7" fill="#139ee0" stroke="#bff0ff" stroke-width="1.8"/>
</g>
</svg></div><div class="a" id="toolshadow" style="left:0;top:138px;width:1536px;height:4px;background:linear-gradient(#e4e4e4,rgba(255,255,255,0))"></div>
<!-- browser header -->
<div class="a" style="left:-1px;top:147px;width:366px;height:29px;background:#f0f0f0;border:1px solid #d6d6d6"></div>
<svg class="a" style="left:0;top:140px" width="380" height="230">
<path d="M4 21.5L10 17.5V25.5Z M10 21.5L16 17.5V25.5Z" fill="#333"/>
<circle cx="345.5" cy="22" r="5.3" fill="#2b2b2b"/><path d="M342.5 22H348.5" stroke="#eee" stroke-width="1.6"/>
<path d="M359.5 16V28M362 14V30" stroke="#999" stroke-width="0.9"/>
<!-- row backgrounds -->
<rect x="43" y="44" width="181" height="24" fill="#e9e9e9" fill-opacity="0.9"/>
<rect x="65" y="73" width="173" height="23.5" fill="#ececec" fill-opacity="0.9"/>
<rect x="65" y="103" width="139" height="23.5" fill="#ececec" fill-opacity="0.9"/>
<rect x="65" y="132" width="121" height="23.5" fill="#ececec" fill-opacity="0.9"/>
<rect x="65" y="161" width="125" height="23.5" fill="#ececec" fill-opacity="0.9"/>
<rect x="65" y="190" width="139" height="23.5" fill="#ececec" fill-opacity="0.9"/>
<!-- row 1 -->
<path d="M21 60H30V51Z" fill="#2b2b2b"/>
<path d="M47 55.5Q56.5 46 66 55.5Q56.5 65 47 55.5Z" fill="#9a9a9a"/><circle cx="56.5" cy="55.5" r="3.3" fill="#e9e9e9"/><circle cx="56.5" cy="55.5" r="1.8" fill="#9a9a9a"/>
<rect x="74" y="46" width="119" height="19" fill="#8e8e8e"/>
<defs><linearGradient id="cg" x1="0" y1="0" x2="1" y2="1"><stop offset="0" stop-color="#f4f4f8"/><stop offset="1" stop-color="#b4b4bc"/></linearGradient></defs><path d="M79 50L82 46.5H94.5V59L91.5 62.5H79Z" fill="url(#cg)" stroke="#555" stroke-width="1.1" stroke-linejoin="round"/><path d="M91.5 50L94.5 46.5V59L91.5 62.5Z" fill="#9c9ca6"/><path d="M79 50H91.5V62.5" fill="none" stroke="#888" stroke-width="0.6"/>
<circle cx="206.5" cy="55.5" r="8" fill="#d8d8de" stroke="#aaaab2" stroke-width="1.3"/><circle cx="206.5" cy="55.5" r="5.5" fill="#eeeef2"/><circle cx="206.5" cy="55.5" r="2.8" fill="#2a2a30"/>
<!-- triangles outline -->
<g fill="none" stroke="#555" stroke-width="1.2" stroke-linejoin="round">
<path d="M44 80V90.5L51 85.2Z"/><path d="M44 109.5V120L51 114.7Z"/><path d="M44 138.5V149L51 143.7Z"/><path d="M44 168V178.5L51 173.2Z"/><path d="M44 197.5V208L51 202.7Z"/>
</g>
<!-- gear -->
<g transform="translate(78,85)">
<circle r="6.8" fill="#8e8e8e"/>
<g fill="#8e8e8e"><rect x="-2" y="-10" width="4" height="20"/><rect x="-2" y="-10" width="4" height="20" transform="rotate(45)"/><rect x="-2" y="-10" width="4" height="20" transform="rotate(90)"/><rect x="-2" y="-10" width="4" height="20" transform="rotate(135)"/></g>
<circle r="3" fill="#ececec"/>
</g>
<!-- folders -->
<g fill="#8e8e8e" transform="translate(0,1.5)">
<path d="M68 104.5H75L76 106.5H88V121H68Z"/>
<path d="M99 134H106L107 136H118V150.5H99Z"/>
<path d="M99 163H106L107 165H118V179.5H99Z"/>
<path d="M99 192.5H106L107 194.5H118V209H99Z"/>
</g>
<g fill="#ececec" transform="translate(0,1.5)"><rect x="68" y="108" width="20" height="1"/><rect x="99" y="137.5" width="19" height="1"/><rect x="99" y="166.5" width="19" height="1"/><rect x="99" y="196" width="19" height="1"/></g>
<!-- eyes -->
<g>
<path d="M69 143.5Q78.5 134 88 143.5Q78.5 153 69 143.5Z" fill="none" stroke="#aaa" stroke-width="1.2"/><circle cx="78.5" cy="143.5" r="2.5" fill="none" stroke="#aaa" stroke-width="1.1"/><path d="M71 137L86 150" stroke="#aaa" stroke-width="1.2"/>
<path d="M69 173Q78.5 163.5 88 173Q78.5 182.5 69 173Z" fill="#8e8e8e"/><circle cx="78.5" cy="173" r="3.3" fill="#ececec"/><circle cx="78.5" cy="173" r="1.8" fill="#8e8e8e"/>
<path d="M69 202.5Q78.5 193 88 202.5Q78.5 212 69 202.5Z" fill="#8e8e8e"/><circle cx="78.5" cy="202.5" r="3.3" fill="#ececec"/><circle cx="78.5" cy="202.5" r="1.8" fill="#8e8e8e"/>
</g>
</svg>
<!-- comments -->
<div class="a" style="left:-1px;top:802px;width:366px;height:29px;background:#f0f0f0;border:1px solid #d6d6d6"></div>
<svg class="a" style="left:0;top:790px" width="380" height="50">
<circle cx="345.5" cy="26" r="5.3" fill="#2b2b2b"/><path d="M342.5 26H348.5M345.5 23V29" stroke="#eee" stroke-width="1.5"/>
<path d="M359.5 20V32M362 18V34" stroke="#999" stroke-width="0.9"/>
</svg>
<!-- nav bar -->
<div class="a" style="left:625px;top:800px;width:290px;height:29px;background:#ededed;opacity:0.95"></div>
<svg class="a" style="left:600px;top:790px" width="340" height="50">
<g fill="none" stroke="#555" stroke-width="1"><path d="M38 13L33.5 18H36V33H40V18H42.5Z" fill="#fafafa"/><path d="M31 23.5Q27 26 31 28.5Q38 31 45 28.5Q48.5 26.5 46 24.5"/><path d="M31 26L28 29L33 29.5Z" fill="#555"/></g>
<path d="M55 23H61L58 27Z" fill="#222"/>
<g stroke="#666" stroke-width="1" fill="#ddd"><rect x="69" y="20" width="18" height="12" rx="1"/><path d="M70 20L72 15L75 18L78 15L81 18L84 15L86 20"/><rect x="72" y="23" width="12" height="6" fill="#bbb"/></g>
<path d="M104.5 32L100.5 25Q99.5 23 101 22.5Q102.5 22 104 24.5V15.5Q104 14 105.2 14Q106.4 14 106.4 15.5V22V13Q106.4 11.5 107.6 11.5Q108.8 11.5 108.8 13V22V14Q108.8 12.5 110 12.5Q111.2 12.5 111.2 14V22.5V16.5Q111.2 15 112.4 15Q113.6 15 113.6 16.5V26Q113.6 30 111 33H105.5Z" fill="#fafafa" stroke="#555" stroke-width="1"/>
<g fill="none" stroke="#555" stroke-width="1.2"><circle cx="140" cy="22" r="6"/><path d="M144.5 26.5L151 33" stroke-width="2.5"/><path d="M149 13V19M146 16H152" stroke-width="1"/></g>
<g><rect x="164.5" y="14.5" width="18" height="18" fill="none" stroke="#888" stroke-dasharray="2 2"/><circle cx="171" cy="22" r="6" fill="none" stroke="#555" stroke-width="1.2"/><path d="M175.5 26.5L182 33" stroke="#555" stroke-width="2.5"/></g>
<path d="M191 23H197L194 27Z" fill="#222"/>
<g><rect x="206" y="15.5" width="18" height="13" fill="#a0c4ee" stroke="#6a7a90" stroke-width="1.5"/><path d="M214.5 29V32M209 33H220" stroke="#5a6a80" stroke-width="1.5"/></g>
<path d="M230 23H236L233 27Z" fill="#222"/>
<g><rect x="243" y="15" width="18" height="18" fill="#e0e0e0" stroke="#777"/><path d="M246 15V33M249 15V33M252 15V33M255 15V33M258 15V33M243 18H261M243 21H261M243 24H261M243 27H261M243 30H261" stroke="#777" stroke-width="0.9"/></g>
<path d="M267 23H273L270 27Z" fill="#222"/>
<g><rect x="281" y="16" width="18" height="17" fill="#6f98d6" stroke="#6a8cc0"/><path d="M290 16V33M281 24.5H299" stroke="#e8eef8" stroke-width="1.5"/></g>
<path d="M304 23H310L307 27Z" fill="#222"/>
</svg>
<!-- bottom-right viewport icon -->
<svg class="a" style="left:1508px;top:808px" width="24" height="24"><path d="M11.5 2A9.5 9.5 0 1 0 21 12V21H12Z" fill="#111"/><circle cx="11.5" cy="11.5" r="9.5" fill="#111"/><path d="M6 16Q9 10 15 8L17 10Q12 11 8 17Z" fill="#fff"/></svg>
<div class="a" style="left:1069px;top:487px;width:19px;height:26px;background:#efefef"></div><div class="a" style="left:1081px;top:488px;width:1.6px;height:24px;background:#c4c4c4"></div><div class="a" style="left:1086px;top:488px;width:1.6px;height:24px;background:#c4c4c4"></div>
<div class="a" style="left:1087px;top:264px;width:452px;height:535px;background:#f1f1f1;border:1px solid #d2d2d2;box-shadow:0 0 2px rgba(0,0,0,0.08)"></div>
<div class="a" style="left:1088px;top:293px;width:448px;height:1px;background:#d4d4d4"></div>
<div class="a" style="left:1088px;top:755px;width:440px;height:1px;background:#d4d4d4"></div>
<!-- scrollbar -->
<div class="a" style="left:1527px;top:295px;width:6px;height:460px;background:#e4e4e4"></div>
<div class="a" style="left:1527.5px;top:526px;width:5px;height:229px;background:#a8a8a8;border-radius:2px"></div>

<!-- inputs -->
<div class="a" style="left:1322px;top:383px;width:146px;height:29px;background:#fff;border:1px solid #cfcfcf"></div>
<div class="a" style="left:1322px;top:422px;width:146px;height:28px;background:#fff;border:1px solid #cfcfcf"></div>
<div class="a" style="left:1212.5px;top:499px;width:287px;height:32px;background:#fff;border:1px solid #d0d0d0"></div>
<div class="a" style="left:1212.5px;top:536px;width:287px;height:32px;background:#fff;border:1px solid #d0d0d0"></div>
<div class="a" style="left:1212.5px;top:572.5px;width:287px;height:32px;background:#fff;border:1px solid #d0d0d0"></div>
<div class="a" style="left:1212.5px;top:609.5px;width:287px;height:32px;background:#fff;border:1px solid #d0d0d0"></div>
<div class="a" style="left:1212.5px;top:646px;width:287px;height:32px;background:#fff;border:1px solid #d0d0d0"></div>
<div class="a" style="left:1379px;top:766px;width:72px;height:23px;background:#ececec;border:1px solid #c6c6c6"></div>
<div class="a" style="left:1459px;top:766px;width:73px;height:23px;background:#ececec;border:1px solid #c6c6c6"></div>
<svg class="a" style="left:1080px;top:260px" width="460" height="545">
<path d="M10.5 13V26M12.5 13V26" stroke="#999" stroke-width="0.8"/>
<circle cx="27" cy="19.6" r="6" fill="#2b2b2b"/><path d="M23.7 19.6H30.3" stroke="#eee" stroke-width="1.7"/>
<path d="M440 14.5L446 19L440 23.5Z M446 14.5L452 19L446 23.5Z" fill="#222"/>
<!-- drawing -->
<path d="M56 36V41" stroke="#888" stroke-width="1"/>
<path d="M40 45H74M40 148H74" stroke="#e04848" stroke-width="2"/>
<path d="M55.7 52V141" stroke="#4a7fc0" stroke-width="2"/>
<path d="M55.7 48L51.5 55H60Z M55.7 145L51.5 138H60Z" fill="#4a7fc0"/>
<path d="M81.5 46.5H132.5V148.5L107 166L81.5 148.5Z" fill="#c9c9c9" stroke="#979797" stroke-width="3.5" stroke-linejoin="round"/>
<g stroke="#999" stroke-width="2"><path d="M90 58.6H124M95 68.6H119M90 78.6H124M95 88.5H119M90 98.3H124M95 108.3H119M90 118.1H124M95 128H119"/></g>
<path d="M94 152Q107 141 120 152" fill="none" stroke="#4a7fc0" stroke-width="2.2"/>
<path d="M92 155L93 148L99 151Z M122 155L121 148L115 151Z" fill="#4a7fc0"/>
<path d="M112 144L123 137H242" fill="none" stroke="#8a8a8a" stroke-width="1.5"/>
<path d="M80.5 165V184M134.5 165V184" stroke="#e04848" stroke-width="2"/>
<path d="M87 175.5H128" stroke="#4a7fc0" stroke-width="2"/>
<path d="M83 175.5L90 171.5V179.5Z M131 175.5L124 171.5V179.5Z" fill="#4a7fc0"/>
<path d="M139 175.5H242" stroke="#8a8a8a" stroke-width="1.5"/>
<!-- checkbox -->
<rect x="139.5" y="432" width="15" height="15" rx="2.5" fill="#e6e6e6" stroke="#555" stroke-width="1.2"/>
<path d="M142.5 439.5L146 444L152 434.5" fill="none" stroke="#222" stroke-width="1.5"/>
<!-- objects to cut triangle -->
<path d="M19.5 470V481L26.5 475.5Z" fill="#222"/>
<!-- info -->
<circle cx="25" cy="518" r="7.5" fill="#111"/><rect x="23.8" y="516" width="2.5" height="6.5" fill="#fff"/><circle cx="25" cy="513.5" r="1.4" fill="#fff"/>
<!-- dropdown arrows -->
<g fill="#222"><path d="M406 253H413L409.5 257Z"/><path d="M406 289.5H413L409.5 293.5Z"/><path d="M406 326.5H413L409.5 330.5Z"/><path d="M406 363H413L409.5 367Z"/><path d="M406 400H413L409.5 404Z"/></g>
</svg>
<div id="timeline" class="a"></div>
<svg class="a" style="left:0;top:838px" width="1536" height="59">
<g fill="#3a3a3a">
<rect x="7" y="24" width="2.5" height="16"/><path d="M22 24V40L10 32Z"/>
<path d="M48 24V40L36 32Z"/><rect x="49.5" y="28" width="2.5" height="8"/>
<path d="M68 24V40L83 32Z"/>
<rect x="97" y="28" width="2.5" height="8"/><path d="M101 24V40L113 32Z"/>
<path d="M129 24V40L141 32Z"/><rect x="142" y="24" width="2.5" height="16"/>
</g>
<!-- sketch feature -->
<g><rect x="173" y="21.8" width="16.5" height="16.2" fill="none" stroke="#7a8490" stroke-width="1.2"/><rect x="171.5" y="20.5" width="2.5" height="2.5" fill="#667"/><rect x="188.5" y="20.5" width="2.5" height="2.5" fill="#667"/><rect x="171.5" y="36.5" width="2.5" height="2.5" fill="#667"/>
<path d="M177.5 25.5V33M177.5 25.5H185Q185 32 178 33" fill="none" stroke="#7a8aa0" stroke-width="1"/>
<path d="M183.5 39L190 32.5L192.5 35L186 41.5Z" fill="#f2c060"/><path d="M190 32.5L192.5 35L193.5 31.5Z" fill="#e04848"/></g>
<!-- extrude feature -->
<g><path d="M202.2 24L205.5 21H217L214 24Z" fill="#8ccbf7"/><rect x="202.2" y="24" width="12" height="14" fill="#5eabec"/><path d="M214 24L217 21V34L214 38Z" fill="#4796dc"/><path d="M202.2 38H214L217 34V36L214 39.8H202.2Z" fill="#b8c4d0"/>
<path d="M219.2 23V36" stroke="#555" stroke-width="1"/><circle cx="219.2" cy="23" r="1.2" fill="#333"/></g>
<path d="M183.1 44.5V51.5H211.6V44.5" fill="none" stroke="#cdcdcd" stroke-width="1.8"/>
<!-- marker -->
<path d="M219.2 13.5H233.5V17L228 24.5H224.5L219.2 17Z" fill="#555"/>
<rect x="224.6" y="22" width="3.2" height="30" rx="1" fill="#555"/>
<!-- gear -->
<g transform="translate(1519,31)">
<circle r="7" fill="#8e8e8e"/>
<g fill="#8e8e8e"><rect x="-2" y="-10" width="4" height="20"/><rect x="-2" y="-10" width="4" height="20" transform="rotate(45)"/><rect x="-2" y="-10" width="4" height="20" transform="rotate(90)"/><rect x="-2" y="-10" width="4" height="20" transform="rotate(135)"/></g>
<circle r="3.2" fill="#f1f1f1"/>
</g>
</svg>
<div class="a tx" id="t0" style="left:176.0px;top:43.96px;font-size:14.2px;color:#1b8bc9;font-weight:400;transform:scaleX(0.9066);transform-origin:0 0;-webkit-text-stroke:0.3px currentColor;">SOLID</div>
<div class="a tx" id="t1" style="left:271.6px;top:43.96px;font-size:14.2px;color:#3a3a3a;font-weight:400;transform:scaleX(0.8655);transform-origin:0 0;-webkit-text-stroke:0.3px currentColor;">SURFACE</div>
<div class="a tx" id="t2" style="left:385.9px;top:43.96px;font-size:14.2px;color:#3a3a3a;font-weight:400;transform:scaleX(0.8390);transform-origin:0 0;-webkit-text-stroke:0.3px currentColor;">MESH</div>
<div class="a tx" id="t3" style="left:474.5px;top:43.96px;font-size:14.2px;color:#3a3a3a;font-weight:400;transform:scaleX(0.9050);transform-origin:0 0;-webkit-text-stroke:0.3px currentColor;">SHEET METAL</div>
<div class="a tx" id="t4" style="left:619.6px;top:43.96px;font-size:14.2px;color:#3a3a3a;font-weight:400;transform:scaleX(0.8691);transform-origin:0 0;-webkit-text-stroke:0.3px currentColor;">PLASTIC</div>
<div class="a tx" id="t5" style="left:727.0px;top:43.96px;font-size:14.2px;color:#3a3a3a;font-weight:400;transform:scaleX(0.8862);transform-origin:0 0;-webkit-text-stroke:0.3px currentColor;">UTILITIES</div>
<div class="a tx" id="t6" style="left:840.7px;top:43.96px;font-size:14.2px;color:#3a3a3a;font-weight:400;transform:scaleX(0.9220);transform-origin:0 0;-webkit-text-stroke:0.3px currentColor;">MANAGE</div>
<div class="a tx" id="t7" style="left:277.0px;top:117.76px;font-size:14.2px;color:#3a3a3a;font-weight:400;transform:scaleX(0.8850);transform-origin:0 0;-webkit-text-stroke:0.3px currentColor;">CREATE</div>
<div class="a tx" id="t8" style="left:606.5px;top:117.76px;font-size:14.2px;color:#3a3a3a;font-weight:400;transform:scaleX(0.9063);transform-origin:0 0;-webkit-text-stroke:0.3px currentColor;">MODIFY</div>
<div class="a tx" id="t9" style="left:824.6px;top:117.76px;font-size:14.2px;color:#3a3a3a;font-weight:400;transform:scaleX(0.8288);transform-origin:0 0;-webkit-text-stroke:0.3px currentColor;">ASSEMBLE</div>
<div class="a tx" id="t10" style="left:941.0px;top:117.76px;font-size:14.2px;color:#3a3a3a;font-weight:400;transform:scaleX(0.8982);transform-origin:0 0;-webkit-text-stroke:0.3px currentColor;">CONSTRUCT</div>
<div class="a tx" id="t11" style="left:1067.8px;top:117.76px;font-size:14.2px;color:#3a3a3a;font-weight:400;transform:scaleX(0.8488);transform-origin:0 0;-webkit-text-stroke:0.3px currentColor;">INSPECT</div>
<div class="a tx" id="t12" style="left:1163.8px;top:117.76px;font-size:14.2px;color:#3a3a3a;font-weight:400;transform:scaleX(0.8459);transform-origin:0 0;-webkit-text-stroke:0.3px currentColor;">INSERT</div>
<div class="a tx" id="t13" style="left:1255.0px;top:117.76px;font-size:14.2px;color:#3a3a3a;font-weight:400;transform:scaleX(0.8242);transform-origin:0 0;-webkit-text-stroke:0.3px currentColor;">SELECT</div>
<div class="a tx" id="t14" style="left:43.8px;top:80.67px;font-size:14px;color:#3a3a3a;font-weight:700;transform:scaleX(0.9220);transform-origin:0 0;">DESIGN</div>
<div class="a tx" id="t15" style="left:503.0px;top:13.41px;font-size:15.5px;color:#6c6c6c;font-weight:400;transform:scaleX(1.0581);transform-origin:0 0;-webkit-text-stroke:0.3px currentColor;">Untitled*</div>
<div class="a tx" id="t16" style="left:992.0px;top:13.41px;font-size:15.5px;color:#444;font-weight:400;transform:scaleX(1.0641);transform-origin:0 0;-webkit-text-stroke:0.3px currentColor;">Untitled*(2)</div>
<div class="a tx" id="t17" style="left:1499.0px;top:10.41px;font-size:15.5px;color:#333;font-weight:400;transform:scaleX(0.9571);transform-origin:0 0;-webkit-text-stroke:0.3px currentColor;">AK</div>
<div class="a tx" id="t18" style="left:28.5px;top:154.67px;font-size:14px;color:#5a5a5a;font-weight:400;transform:scaleX(0.8321);transform-origin:0 0;-webkit-text-stroke:0.3px currentColor;">BROWSER</div>
<div class="a tx" id="t19" style="left:28.4px;top:808.87px;font-size:14px;color:#5a5a5a;font-weight:400;transform:scaleX(0.9257);transform-origin:0 0;-webkit-text-stroke:0.3px currentColor;">COMMENTS</div>
<div class="a tx" id="t20" style="left:112.8px;top:188.51px;font-size:14.5px;color:#ffffff;font-weight:700;transform:scaleX(0.9813);transform-origin:0 0;">(Unsaved)</div>
<div class="a tx" id="t21" style="left:104.6px;top:217.66px;font-size:15px;color:#444;font-weight:400;transform:scaleX(0.9634);transform-origin:0 0;-webkit-text-stroke:0.3px currentColor;">Document Settings</div>
<div class="a tx" id="t22" style="left:104.6px;top:246.96px;font-size:15px;color:#444;font-weight:400;transform:scaleX(0.9343);transform-origin:0 0;-webkit-text-stroke:0.3px currentColor;">Named Views</div>
<div class="a tx" id="t23" style="left:135.4px;top:276.06px;font-size:15px;color:#444;font-weight:400;transform:scaleX(0.9746);transform-origin:0 0;-webkit-text-stroke:0.3px currentColor;">Origin</div>
<div class="a tx" id="t24" style="left:135.4px;top:305.36px;font-size:15px;color:#444;font-weight:400;transform:scaleX(0.8937);transform-origin:0 0;-webkit-text-stroke:0.3px currentColor;">Bodies</div>
<div class="a tx" id="t25" style="left:135.4px;top:334.96px;font-size:15px;color:#444;font-weight:400;transform:scaleX(0.8978);transform-origin:0 0;-webkit-text-stroke:0.3px currentColor;">Sketches</div>
<div class="a tx" id="t26" style="left:1117.0px;top:272.36px;font-size:14px;color:#555;font-weight:400;transform:scaleX(0.9049);transform-origin:0 0;-webkit-text-stroke:0.3px currentColor;">HOLE</div>
<div class="a tx" id="t27" style="left:1326.0px;top:389.81px;font-size:14.5px;color:#3a3a3a;font-weight:400;transform:scaleX(1.0246);transform-origin:0 0;-webkit-text-stroke:0.3px currentColor;">118.0 deg</div>
<div class="a tx" id="t28" style="left:1326.0px;top:427.81px;font-size:14.5px;color:#999;font-weight:400;transform:scaleX(1.0076);transform-origin:0 0;-webkit-text-stroke:0.3px currentColor;">0.201 in</div>
<div class="a tx" id="t29" style="left:1103.0px;top:508.31px;font-size:14.5px;color:#444;font-weight:400;transform:scaleX(0.9858);transform-origin:0 0;-webkit-text-stroke:0.3px currentColor;">Thread Type</div>
<div class="a tx" id="t30" style="left:1103.0px;top:544.41px;font-size:14.5px;color:#444;font-weight:400;transform:scaleX(0.8718);transform-origin:0 0;-webkit-text-stroke:0.3px currentColor;">Size</div>
<div class="a tx" id="t31" style="left:1103.0px;top:581.21px;font-size:14.5px;color:#444;font-weight:400;transform:scaleX(0.9925);transform-origin:0 0;-webkit-text-stroke:0.3px currentColor;">Designation</div>
<div class="a tx" id="t32" style="left:1103.0px;top:618.01px;font-size:14.5px;color:#444;font-weight:400;transform:scaleX(0.8907);transform-origin:0 0;-webkit-text-stroke:0.3px currentColor;">Class</div>
<div class="a tx" id="t33" style="left:1103.0px;top:654.81px;font-size:14.5px;color:#444;font-weight:400;transform:scaleX(1.0084);transform-origin:0 0;-webkit-text-stroke:0.3px currentColor;">Direction</div>
<div class="a tx" id="t34" style="left:1103.0px;top:691.61px;font-size:14.5px;color:#444;font-weight:400;transform:scaleX(0.9708);transform-origin:0 0;-webkit-text-stroke:0.3px currentColor;">Modeled</div>
<div class="a tx" id="t35" style="left:1116.9px;top:728.41px;font-size:14.5px;color:#333;font-weight:700;transform:scaleX(1.0064);transform-origin:0 0;">Objects To Cut</div>
<div class="a tx" id="t36" style="left:1221.4px;top:508.31px;font-size:14.5px;color:#333;font-weight:400;transform:scaleX(0.9659);transform-origin:0 0;-webkit-text-stroke:0.3px currentColor;">ANSI Unified Screw Threads</div>
<div class="a tx" id="t37" style="left:1221.4px;top:544.41px;font-size:14.5px;color:#333;font-weight:400;transform:scaleX(1.0242);transform-origin:0 0;-webkit-text-stroke:0.3px currentColor;">0.25 in</div>
<div class="a tx" id="t38" style="left:1221.4px;top:581.21px;font-size:14.5px;color:#333;font-weight:400;transform:scaleX(1.0488);transform-origin:0 0;-webkit-text-stroke:0.3px currentColor;">1/4-20 UNC</div>
<div class="a tx" id="t39" style="left:1221.4px;top:618.01px;font-size:14.5px;color:#333;font-weight:400;transform:scaleX(0.8507);transform-origin:0 0;-webkit-text-stroke:0.3px currentColor;">3B</div>
<div class="a tx" id="t40" style="left:1221.4px;top:654.81px;font-size:14.5px;color:#333;font-weight:400;transform:scaleX(0.9920);transform-origin:0 0;-webkit-text-stroke:0.3px currentColor;">Left hand</div>
<div class="a tx" id="t41" style="left:1403.6px;top:770.61px;font-size:14.5px;color:#666;font-weight:400;transform:scaleX(0.9306);transform-origin:0 0;-webkit-text-stroke:0.3px currentColor;">OK</div>
<div class="a tx" id="t42" style="left:1471.0px;top:770.61px;font-size:14.5px;color:#666;font-weight:400;transform:scaleX(1.0345);transform-origin:0 0;-webkit-text-stroke:0.3px currentColor;">Cancel</div></body></html>
